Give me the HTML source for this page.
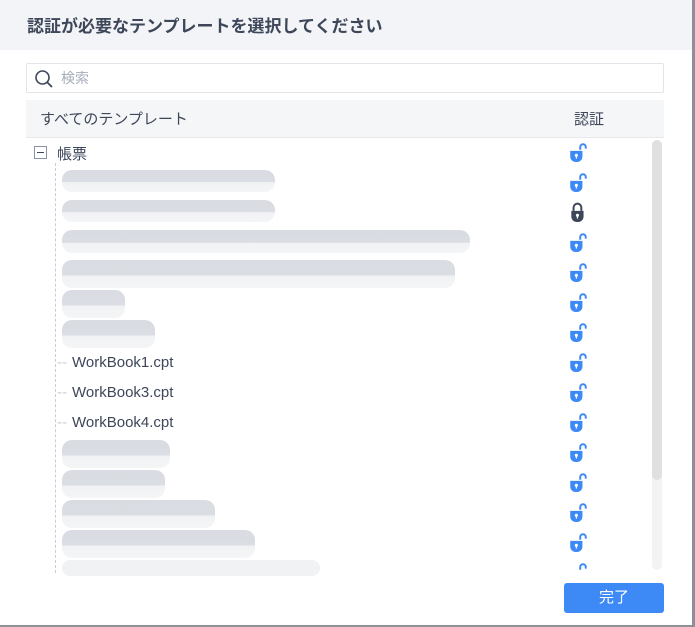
<!DOCTYPE html><html><head><meta charset="utf-8"><style>
*{margin:0;padding:0;box-sizing:border-box}
body{width:695px;height:627px;background:#fff;font-family:"Liberation Sans","Noto Sans CJK JP",sans-serif;position:relative;overflow:hidden}
.hdr{position:absolute;left:0;top:0;width:692px;height:50px;background:#f2f4f7;font-size:17px;font-weight:bold;color:#3d4759;padding:12px 0 0 27px}
.rb{position:absolute;right:0;top:0;width:3px;height:627px;background:#8d9099}
.bb{position:absolute;left:0;bottom:0;width:695px;height:2px;background:#8d9099}
.search{position:absolute;left:26px;top:63px;width:638px;height:30px;border:1px solid #e1e4e8;border-radius:2px}
.search span{position:absolute;left:34px;top:4px;font-size:14px;color:#a7adb8}
.th{position:absolute;left:26px;top:100px;width:638px;height:38px;background:#f5f6f8;border-bottom:1px solid #e6e8ec;font-size:15px;color:#3d4759}
.row{position:absolute;font-size:15px;color:#3d4759}
.b{position:absolute;border-radius:10px;background:linear-gradient(#d9dce2 0,#dadde3 55%,#f1f2f4 56%,#f4f5f6 100%)}
.lk{position:absolute;left:569px;width:18px;height:20px}
.sb{position:absolute;left:652px;top:140px;width:10px;height:430px;background:#f3f3f4;border-radius:5px}
.sbt{position:absolute;left:652px;top:140px;width:10px;height:340px;background:#dfe0e2;border-radius:5px}
.btn{position:absolute;left:564px;top:583px;width:100px;height:30px;background:#3d8af7;border-radius:3px;color:#fff;font-size:15px;text-align:center;line-height:30px}
.vl{position:absolute;left:55px;top:163px;height:410px;border-left:1px dashed #c8ccd3}
</style></head><body>
<div class="hdr">認証が必要なテンプレートを選択してください</div>
<div class="search"><svg style="position:absolute;left:7px;top:5px" width="20" height="20" viewBox="0 0 20 20"><circle cx="8.5" cy="8.5" r="6.5" fill="none" stroke="#3d4759" stroke-width="1.6"/><path d="M13.2 13.2L18 18" stroke="#3d4759" stroke-width="1.8"/></svg><span>検索</span></div>
<div class="th"><span style="position:absolute;left:14px;top:8px">すべてのテンプレート</span><span style="position:absolute;left:548px;top:8px">認証</span></div>
<div style="position:absolute;left:34px;top:146px;width:13px;height:13px;border:1px solid #8a93a3"></div>
<div style="position:absolute;left:37px;top:152px;width:7px;height:1px;background:#3d4759"></div>
<div class="row" style="left:57px;top:143px">帳票</div>
<div class="vl"></div>
<div class="b" style="left:62px;top:170px;width:213px;height:22px"></div>
<div class="b" style="left:62px;top:200px;width:213px;height:22px"></div>
<div class="b" style="left:62px;top:230px;width:408px;height:23px"></div>
<div class="b" style="left:62px;top:260px;width:393px;height:28px"></div>
<div class="b" style="left:62px;top:290px;width:63px;height:28px"></div>
<div class="b" style="left:62px;top:320px;width:93px;height:28px"></div>
<div class="row" style="left:57px;top:354px;color:#c8ccd3">--</div><div class="row" style="left:72px;top:354px">WorkBook1.cpt</div>
<div class="row" style="left:57px;top:384px;color:#c8ccd3">--</div><div class="row" style="left:72px;top:384px">WorkBook3.cpt</div>
<div class="row" style="left:57px;top:414px;color:#c8ccd3">--</div><div class="row" style="left:72px;top:414px">WorkBook4.cpt</div>
<div class="b" style="left:62px;top:440px;width:108px;height:28px"></div>
<div class="b" style="left:62px;top:470px;width:103px;height:28px"></div>
<div class="b" style="left:62px;top:500px;width:153px;height:28px"></div>
<div class="b" style="left:62px;top:530px;width:193px;height:28px"></div>
<div class="b" style="left:62px;top:560px;width:258px;height:16px;background:#f1f2f4"></div>
<svg width="0" height="0" style="position:absolute"><defs>
<symbol id="u" viewBox="0 0 16 18"><path d="M10 7V4.5a2.5 2.5 0 0 1 5 0V6" fill="none" stroke="#3d8af7" stroke-width="1.8"/><path d="M1 8h11v5a5 5 0 0 1-5 5H6a5 5 0 0 1-5-5z" fill="#3d8af7"/><circle cx="6.5" cy="12" r="1.4" fill="#fff"/><rect x="6" y="12" width="1" height="3" fill="#fff"/></symbol>
<symbol id="l" viewBox="0 0 16 18"><path d="M4 8V5a3.5 3.5 0 0 1 7 0v3" fill="none" stroke="#3d4759" stroke-width="1.8"/><path d="M2 8h11v5a5 5 0 0 1-5 5H7a5 5 0 0 1-5-5z" fill="#3d4759"/><circle cx="7.5" cy="12" r="1.4" fill="#fff"/><rect x="7" y="12" width="1" height="3" fill="#fff"/></symbol></defs></svg>
<svg class="lk" style="top:142px"><use href="#u" width="18" height="20"/></svg>
<svg class="lk" style="top:172px"><use href="#u" width="18" height="20"/></svg>
<svg class="lk" style="top:202px"><use href="#l" width="18" height="20"/></svg>
<svg class="lk" style="top:232px"><use href="#u" width="18" height="20"/></svg>
<svg class="lk" style="top:262px"><use href="#u" width="18" height="20"/></svg>
<svg class="lk" style="top:292px"><use href="#u" width="18" height="20"/></svg>
<svg class="lk" style="top:322px"><use href="#u" width="18" height="20"/></svg>
<svg class="lk" style="top:352px"><use href="#u" width="18" height="20"/></svg>
<svg class="lk" style="top:382px"><use href="#u" width="18" height="20"/></svg>
<svg class="lk" style="top:412px"><use href="#u" width="18" height="20"/></svg>
<svg class="lk" style="top:442px"><use href="#u" width="18" height="20"/></svg>
<svg class="lk" style="top:472px"><use href="#u" width="18" height="20"/></svg>
<svg class="lk" style="top:502px"><use href="#u" width="18" height="20"/></svg>
<svg class="lk" style="top:532px"><use href="#u" width="18" height="20"/></svg>
<svg class="lk" style="top:562px;height:8px"><use href="#u" width="18" height="20"/></svg>
<div class="sb"></div><div class="sbt"></div>
<div class="btn">完了</div>
<div class="rb"></div><div class="bb"></div>
</body></html>
